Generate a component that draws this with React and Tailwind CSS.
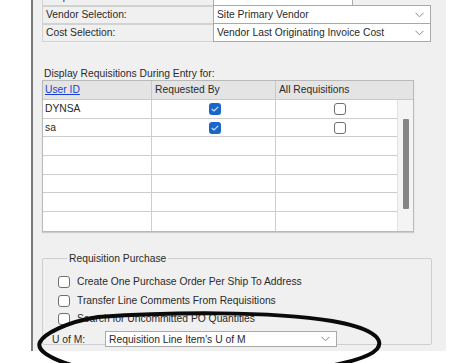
import React from 'react';

const FONT = { fontFamily: '"Liberation Sans", Arial, sans-serif' };

function Chevron() {
  return (
    <svg width="9" height="6" viewBox="0 0 9 6" className="shrink-0">
      <path d="M0.5 0.8 L4.5 4.8 L8.5 0.8" fill="none" stroke="#8a8a8a" strokeWidth="1" />
    </svg>
  );
}

function Box({ checked }) {
  if (checked) {
    return (
      <span className="w-[12px] h-[12px] rounded-[3px] bg-[#1a66c9] flex items-center justify-center">
        <svg width="8" height="6" viewBox="0 0 8 6">
          <path d="M0.8 3 L3 5 L7.2 0.8" fill="none" stroke="#cfe2ff" strokeWidth="1.2" />
        </svg>
      </span>
    );
  }
  return <span className="w-[12px] h-[12px] rounded-[3px] border border-[#6f6f6f] bg-white block" />;
}

const SETTINGS = [
  { label: 'Requisition Line Site ID:', value: "Purchase Line's Site ID", short: true },
  { label: 'Vendor Selection:', value: 'Site Primary Vendor' },
  { label: 'Cost Selection:', value: 'Vendor Last Originating Invoice Cost' },
];

const USERS = [
  { id: 'DYNSA', req: true },
  { id: 'sa', req: true },
  null, null, null, null, null,
];

export default function App() {
  return (
    <div className="relative w-[474px] h-[363px] overflow-hidden bg-white text-[10.3px] text-[#2a2a2a]" style={FONT}>
      <div className="ml-[31px] w-[415px] h-full bg-[#f0f0f0] border-l-2 border-[#7a7a7a] pl-[9px]">
        {/* settings rows */}
        <div className="mt-[-12px] flex flex-col">
          {SETTINGS.map((s) => (
            <div key={s.label} className="flex h-[18px]">
              <div className="w-[171px] border border-[#d2d2d2] border-r-0 -mt-px first:mt-0 flex items-center pl-[3px]">
                {s.label}
              </div>
              <div className={`${s.short ? 'w-[140px]' : 'w-[218px]'} -mt-px bg-white border border-[#a9a9a9] flex items-center justify-between pl-[3px] pr-[6px]`}>
                <span>{s.value}</span>
                {!s.short && <Chevron />}
              </div>
            </div>
          ))}
        </div>

        <div className="mt-[25px] h-[13px] leading-[13px] pl-[2px]">Display Requisitions During Entry for:</div>

        {/* grid */}
        <div className="w-[372px] border border-[#b9b9b9] bg-white shadow-[0_1px_1px_rgba(0,0,0,0.15)]">
          <div className="flex h-[19px] bg-[#e4e4e4] border-b border-[#c9c9c9]">
            <div className="w-[109px] border-r border-[#c9c9c9] pl-[2px] flex items-center">
              <span className="text-[#1b3fd6] underline">User ID</span>
            </div>
            <div className="w-[124px] border-r border-[#c9c9c9] pl-[3px] flex items-center">Requested By</div>
            <div className="flex-1 pl-[3px] flex items-center">All Requisitions</div>
          </div>
          <div className="flex">
            <div className="w-[354px]">
              {USERS.map((u, i) => (
                <div key={i} className="flex h-[18.7px] border-b border-[#cdcdcd] last:border-b-0">
                  <div className="w-[109px] border-r border-[#cdcdcd] pl-[2px] flex items-center">{u ? u.id : ''}</div>
                  <div className="w-[124px] border-r border-[#cdcdcd] flex items-center justify-center pl-[2px]">
                    {u && <Box checked={u.req} />}
                  </div>
                  <div className="flex-1 flex items-center justify-center pl-[6px]">
                    {u && <Box checked={false} />}
                  </div>
                </div>
              ))}
            </div>
            <div className="flex-1 bg-[#f4f4f4] border-l border-[#e2e2e2] pt-[19px] flex justify-center">
              <div className="w-[6px] h-[90px] bg-[#858585] rounded-[1px] ml-[1px]" />
            </div>
          </div>
        </div>

        {/* group box */}
        <fieldset className="mt-[20px] w-[390px] h-[93px] border border-[#cfcfcf] rounded-[2px] pl-[15px]">
          <legend className="ml-[9px] px-[2px] leading-[13px]">Requisition Purchase</legend>
          <div className="mt-[8px] flex flex-col">
            {[
              'Create One Purchase Order Per Ship To Address',
              'Transfer Line Comments From Requisitions',
              'Search for Uncommitted PO Quantities',
            ].map((t) => (
              <div key={t} className="flex items-center h-[18.5px] gap-[7px]">
                <Box checked={false} />
                <span>{t}</span>
              </div>
            ))}
          </div>
          <div className="mt-[3px] -ml-[6px] flex items-center">
            <span className="w-[53px]">U of M:</span>
            <div className="w-[232px] h-[16px] bg-white border border-[#a9a9a9] flex items-center justify-between pl-[3px] pr-[6px]">
              <span>Requisition Line Item's U of M</span>
              <Chevron />
            </div>
          </div>
        </fieldset>
      </div>

      {/* hand-drawn annotation */}
      <svg className="absolute inset-0 pointer-events-none" width="474" height="363" viewBox="0 0 474 363">
        <path
          d="M98 317 C170 312 270 311 332 321 C368 327 386 338 377 349 C368 359 340 364 310 370 C250 380 130 378 75 366 C50 359 36 350 40 342 C44 334 66 322 98 317"
          fill="none"
          stroke="#0a0a0a"
          strokeWidth="4"
          strokeLinecap="round"
        />
      </svg>
    </div>
  );
}
